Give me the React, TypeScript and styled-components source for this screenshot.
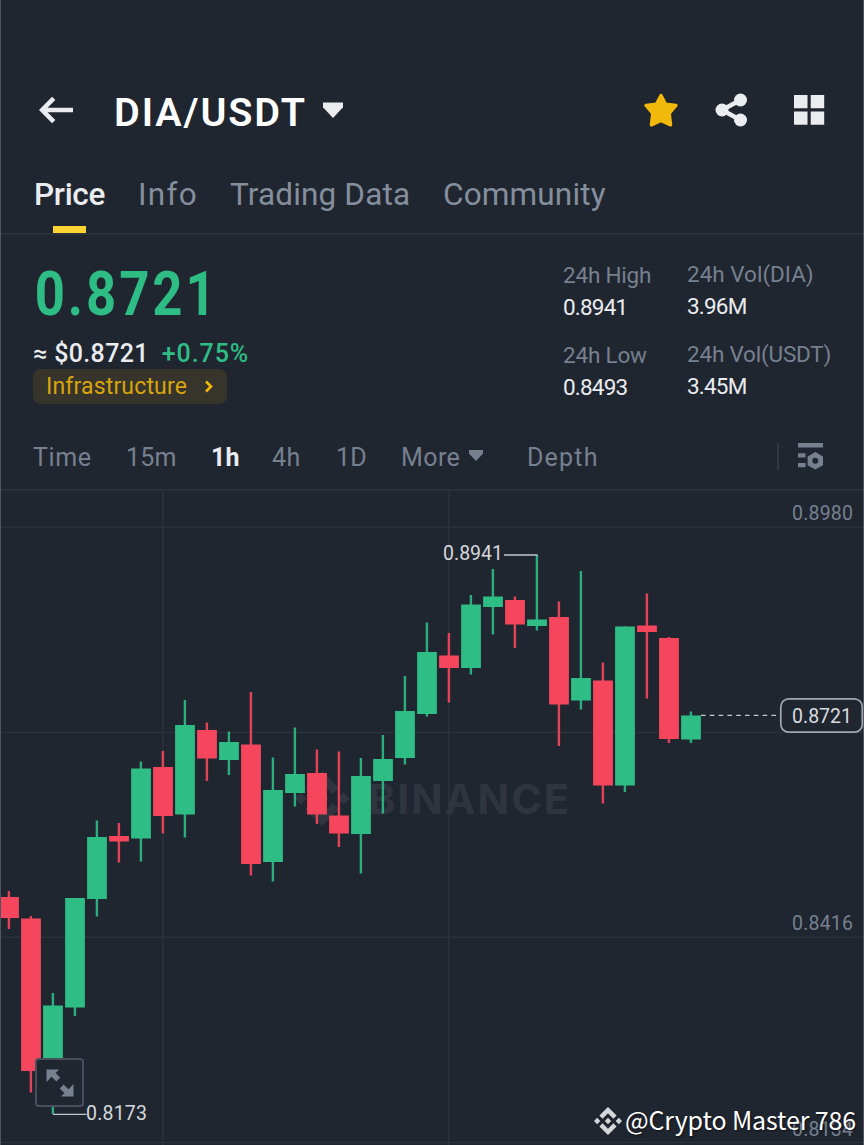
import React from "react";
import styled, { createGlobalStyle } from "styled-components";

const color = {
  bg: "#202630",
  line: "#2b313b",
  text: "#eaecef",
  muted: "#848e9c",
  dim: "#76808f",
  green: "#2ebd85",
  red: "#f6465d",
  yellow: "#f0b90b",
};

const GlobalStyle = createGlobalStyle`
  * { box-sizing: border-box; }
  body { margin: 0; background: ${color.bg}; }
`;

const Screen = styled.div`
  position: relative;
  width: 864px;
  height: 1145px;
  overflow: hidden;
  display: flex;
  flex-direction: column;
  background: ${color.bg};
  color: ${color.text};
  font-family: Roboto, "Liberation Sans", sans-serif;
  white-space: nowrap;
`;

const EdgeFrame = styled.div`
  position: absolute;
  inset: 0;
  border: solid #50555f;
  border-width: 0 1px;
  pointer-events: none;
`;

const Header = styled.header`
  height: 150px;
  padding: 70px 39px 0 39px;
  display: flex;
  align-items: center;
`;

const Title = styled.h1`
  margin: 5px 0 0 41px;
  width: 208px;
  font-size: 39.5px;
  font-weight: 600;
  line-height: 48px;
  letter-spacing: 1.9px;
  color: #fff;
`;

const HeaderActions = styled.div`
  margin-left: auto;
  display: flex;
  align-items: center;
`;

const ActionIcon = styled.svg<{ $gap?: number }>`
  display: block;
  margin-left: ${(p) => p.$gap ?? 0}px;
`;

const Tabs = styled.nav`
  height: 85px;
  padding: 0 34px;
  display: grid;
  grid-template-columns: 104px 92px 213px 1fr;
  border-bottom: 2px solid ${color.line};
`;

const Tab = styled.div<{ $active?: boolean; $spacing?: number }>`
  display: flex;
  flex-direction: column;
  justify-content: space-between;
  padding-top: 25px;
  font-size: 31.5px;
  line-height: 40px;
  letter-spacing: ${(p) => p.$spacing ?? 0.15}px;
  font-weight: ${(p) => (p.$active ? 500 : 400)};
  color: ${(p) => (p.$active ? color.text : color.muted)};
`;

const TabMarker = styled.span`
  width: 33px;
  height: 7px;
  margin-left: 19px;
  background: #fcd535;
`;

const Summary = styled.section`
  height: 191px;
  padding: 28px 0 0 33px;
  display: flex;
`;

const PriceBlock = styled.div`
  width: 530px;
`;

const Price = styled.div`
  height: 62px;
  line-height: 62px;
  padding-left: 2px;
  font-size: 62px;
  font-weight: 700;
  letter-spacing: 3.4px;
  color: ${color.green};
  transform: scaleX(0.85);
  transform-origin: 0 50%;
`;

const PriceSub = styled.div`
  margin-top: 15px;
  height: 27px;
  line-height: 27px;
  display: flex;
  gap: 13px;
  font-size: 25px;
  font-weight: 500;
  letter-spacing: 0.35px;
`;

const Change = styled.span`
  color: ${color.green};
  letter-spacing: 0.9px;
`;

const Tag = styled.div`
  margin-top: 2px;
  width: 194px;
  height: 35px;
  padding: 1px 13px 0;
  border-radius: 8px;
  display: flex;
  align-items: center;
  justify-content: space-between;
  background: #36342b;
  color: #d9a50d;
  font-size: 23px;
  line-height: 36px;
  letter-spacing: 0.17px;
`;

const StatColumn = styled.div<{ $width: number; $lift?: number }>`
  width: ${(p) => p.$width}px;
  margin-top: ${(p) => -(p.$lift ?? 0)}px;
`;

const Stat = styled.div`
  height: 80px;
  font-size: 22.5px;
  line-height: 26px;
`;

const StatLabel = styled.div<{ $spacing?: number }>`
  color: ${color.dim};
  letter-spacing: ${(p) => p.$spacing ?? 0}px;
`;

const StatValue = styled.div`
  margin-top: 6px;
  letter-spacing: -0.8px;
`;

const Intervals = styled.div`
  height: 65px;
  padding: 0 40px 0 33px;
  display: grid;
  grid-template-columns: 93px 85px 61px 64px 65px 126px 1fr auto;
  align-items: center;
  border-bottom: 2px solid ${color.line};
  font-size: 25px;
  line-height: 30px;
  color: ${color.dim};
`;

const Interval = styled.div<{ $active?: boolean; $spacing?: number }>`
  display: flex;
  align-items: center;
  gap: 9px;
  padding-top: 1px;
  letter-spacing: ${(p) => p.$spacing ?? 0.2}px;
  font-weight: ${(p) => (p.$active ? 700 : 400)};
  color: ${(p) => (p.$active ? color.text : color.dim)};
`;

const MoreArrow = styled.svg`
  display: block;
  margin-bottom: 4px;
`;

const IndicatorButton = styled.div`
  height: 27px;
  margin-bottom: 2px;
  padding-left: 18px;
  display: flex;
  align-items: center;
  border-left: 2px solid #323843;
`;

const ChartArea = styled.main`
  position: relative;
  height: 654px;
`;

const ChartSvg = styled.svg`
  display: block;
`;

const ExpandButton = styled.div`
  position: absolute;
  left: 35px;
  top: 567px;
  width: 49px;
  height: 49px;
  border: 2px solid #484f5c;
  border-radius: 4px;
  display: flex;
  align-items: center;
  justify-content: center;
  background: ${color.bg};
`;

const Credit = styled.div`
  position: absolute;
  left: 594px;
  bottom: 5px;
  height: 38px;
  display: flex;
  align-items: center;
  gap: 3px;
  font-family: "Noto Sans CJK SC", "Noto Sans", sans-serif;
  font-size: 25px;
  line-height: 38px;
  letter-spacing: -0.12px;
  color: #fff;
  text-shadow: 1px 1px 2px rgba(0, 0, 0, 0.6);
`;

const CreditName = styled.span`
  padding-bottom: 4px;
`;

const BINANCE_MARK =
  "M16.624 13.9202l2.7175 2.7154-7.353 7.353-7.353-7.352 2.7175-2.7164 4.6355 4.6595 4.6356-4.6595zm4.6366-4.6366L24 12l-2.7154 2.7164L18.5682 12l2.6924-2.7164zm-9.272.001l2.7163 2.6914-2.7164 2.7174v-.001L9.2721 12l2.7164-2.7154zm-9.2722-.001L5.4088 12l-2.6914 2.6924L0 12l2.7164-2.7164zM11.9885.0115l7.353 7.329-2.7174 2.7154-4.6356-4.6356-4.6355 4.6595-2.7174-2.7154 7.353-7.353z";

type Candle = [up: 0 | 1, high: number, top: number, bottom: number, low: number];

const CHART_TOP = 491;
const candles: Candle[] = [
  [0, 891, 897, 918, 929],
  [0, 916, 918.5, 1071, 1092.5],
  [1, 993, 1005.5, 1070, 1114],
  [1, 898, 898, 1007.5, 1016],
  [1, 820.5, 837, 899, 916.5],
  [0, 823, 836, 841.5, 862.5],
  [1, 761.5, 768.5, 838.5, 861.5],
  [0, 751, 767, 816, 833.5],
  [1, 700, 725, 814.5, 837.5],
  [0, 722.5, 730, 758.5, 781],
  [1, 731.5, 742, 760, 775],
  [0, 692, 744.5, 864, 875.5],
  [1, 757.5, 790, 862, 881.5],
  [1, 727.5, 774, 793, 806.5],
  [0, 749.5, 773, 814.5, 824],
  [0, 751.5, 815.5, 833.5, 847],
  [1, 758, 776, 834, 873.5],
  [1, 735, 759, 781, 813.5],
  [1, 676, 711, 758, 764.5],
  [1, 622.5, 652, 714, 716.5],
  [0, 633, 655.5, 668, 702.5],
  [1, 595, 604.5, 668, 674.5],
  [1, 569, 596.5, 607, 634.5],
  [0, 596.5, 600, 624.5, 648],
  [1, 555, 619.5, 626, 630.5],
  [0, 601.5, 617, 704.5, 746],
  [1, 571, 678, 700.5, 709.5],
  [0, 662.5, 680.5, 785.5, 803.5],
  [1, 626.5, 626.5, 785.5, 792],
  [0, 593.5, 625.5, 632, 698.5],
  [0, 637, 638, 739, 743],
  [1, 711.5, 715.5, 739.5, 743],
];

const axisLabels = [
  { y: 520.4, text: "0.8980" },
  { y: 930.4, text: "0.8416" },
  { y: 1136.4, text: "0.8134" },
];

function CandleChart() {
  return (
    <ChartSvg width="864" height="654" viewBox={`0 ${CHART_TOP} 864 654`} fontFamily="Roboto, sans-serif" fontSize="19.5">
      <g stroke={color.line} strokeWidth="1.6">
        {[162.8, 448.8].map((x) => (
          <line key={x} x1={x} x2={x} y1="490" y2="1145" />
        ))}
        {[527.2, 732.5, 937.3, 1142.5].map((y) => (
          <line key={y} x1="0" x2="864" y1={y} y2={y} />
        ))}
      </g>
      <g fill="#2f343f">
        <path d={BINANCE_MARK} transform="translate(294.5 771) scale(2.3)" />
        <text x="368" y="813.5" fontFamily="Inter, sans-serif" fontWeight="700" fontSize="41.5" textLength="201">
          BINANCE
        </text>
      </g>
      {candles.map(([up, high, top, bottom, low], i) => {
        const x = 9 + i * 22;
        return (
          <g key={i} fill={up ? color.green : color.red}>
            <rect x={x - 1.3} y={high} width="2.4" height={low - high} opacity="0.9" />
            <rect x={x - 9.9} y={top} width="19.8" height={bottom - top} />
          </g>
        );
      })}
      <g stroke="#c3c6cc" strokeWidth="1.4">
        <line x1="504" x2="537.5" y1="555" y2="555" />
        <line x1="53" x2="86.5" y1="1114.4" y2="1114.4" />
        <line x1="701" x2="776" y1="715.4" y2="715.4" strokeDasharray="4.6 4.2" />
      </g>
      <g fill="#d5d8dc">
        <text x="443" y="560.4" textLength="60">0.8941</text>
        <text x="86" y="1120.2" textLength="61">0.8173</text>
      </g>
      <g fill={color.dim}>
        {axisLabels.map((l) => (
          <text key={l.text} x="792" y={l.y} textLength="61">
            {l.text}
          </text>
        ))}
      </g>
      <rect x="780.8" y="698.8" width="81.5" height="33.4" rx="8" fill={color.bg} stroke="#a3a6ac" strokeWidth="1.7" />
      <text x="792" y="722.7" textLength="60" fill="#d9dce0">0.8721</text>
    </ChartSvg>
  );
}

export default function App() {
  return (
    <>
      <GlobalStyle />
      <Screen>
        <Header>
          <ActionIcon width="34" height="28" viewBox="0 0 34 28" fill="none" stroke={color.text} strokeWidth="4.6">
            <path d="M14.7 2.3 3.2 14l11.5 11.7M3.5 14H34" />
          </ActionIcon>
          <Title>DIA/USDT</Title>
          <ActionIcon width="22" height="17" viewBox="0 0 22 17" fill={color.text}>
            <path d="M1 .6h20v4.6L11 16 1 5.2z" />
          </ActionIcon>
          <HeaderActions>
            <ActionIcon width="34" height="35" viewBox="0 0 34 35">
              <path
                d="M17 2.500 21.600 11.200 31.900 12.500 25.200 20.300 26.600 31.900 17 27.500 7.400 31.900 8.800 20.300 2.100 12.500 12.400 11.200z"
                fill={color.yellow}
                stroke={color.yellow}
                strokeWidth="3.400"
                strokeLinejoin="round"
              />
            </ActionIcon>
            <ActionIcon $gap={37} width="33" height="34" viewBox="0 0 33 34" fill={color.text}>
              <path d="M7 17 25.500 7M7 17l18.500 10" stroke={color.text} strokeWidth="4.500" />
              <circle cx="7" cy="17" r="6.500" />
              <circle cx="25.500" cy="7" r="6.500" />
              <circle cx="25.500" cy="27" r="6.500" />
            </ActionIcon>
            <ActionIcon $gap={46} width="31" height="30" viewBox="0 0 31 30" fill={color.text}>
              <path d="M0 0h13.500v13.300H0zM16.700 0h13.500v13.300H16.700zM0 16.500h13.500v13.300H0zM16.700 16.500h13.500v13.300H16.700z" />
            </ActionIcon>
          </HeaderActions>
        </Header>

        <Tabs>
          <Tab $active $spacing={-0.3}>
            Price
            <TabMarker />
          </Tab>
          <Tab $spacing={1.3}>Info</Tab>
          <Tab>Trading Data</Tab>
          <Tab>Community</Tab>
        </Tabs>

        <Summary>
          <PriceBlock>
            <Price>0.8721</Price>
            <PriceSub>
              <span>≈ $0.8721</span>
              <Change>+0.75%</Change>
            </PriceSub>
            <Tag>
              Infrastructure
              <svg width="10" height="14" viewBox="0 0 10 14" fill="none" stroke={color.yellow} strokeWidth="2.600">
                <path d="M2 1.500l5 5-5 5" />
              </svg>
            </Tag>
          </PriceBlock>
          <StatColumn $width={124} $lift={1}>
            <Stat>
              <StatLabel $spacing={-0.2}>24h High</StatLabel>
              <StatValue>0.8941</StatValue>
            </Stat>
            <Stat>
              <StatLabel $spacing={-0.2}>24h Low</StatLabel>
              <StatValue>0.8493</StatValue>
            </Stat>
          </StatColumn>
          <StatColumn $width={170} $lift={2}>
            <Stat>
              <StatLabel>24h Vol(DIA)</StatLabel>
              <StatValue>3.96M</StatValue>
            </Stat>
            <Stat>
              <StatLabel $spacing={-0.2}>24h Vol(USDT)</StatLabel>
              <StatValue>3.45M</StatValue>
            </Stat>
          </StatColumn>
        </Summary>

        <Intervals>
          <Interval $spacing={0.6}>Time</Interval>
          <Interval>15m</Interval>
          <Interval $active>1h</Interval>
          <Interval $spacing={0.4}>4h</Interval>
          <Interval>1D</Interval>
          <Interval $spacing={0.4}>
            More
            <MoreArrow width="14" height="12" viewBox="0 0 14 12" fill={color.dim}>
              <path d="M0 0h14v3.500L7 11 0 3.500z" />
            </MoreArrow>
          </Interval>
          <Interval $spacing={1.2}>Depth</Interval>
          <IndicatorButton>
            <svg width="27" height="27" viewBox="0 0 27 27" fill={color.dim}>
              <path d="M1 0h25v4.600H1zM1 10.300h7.500v4.200H1zM1 20h7.500v4.200H1z" />
              <path
                fillRule="evenodd"
                d="M18.300 9l7.700 4.400v8.800l-7.700 4.400-7.700-4.400v-8.800zM18.300 14.800a3 3 0 1 0 0 6 3 3 0 0 0 0-6z"
              />
            </svg>
          </IndicatorButton>
        </Intervals>

        <ChartArea>
          <CandleChart />
          <ExpandButton>
            <svg width="28" height="28" viewBox="0 0 28 28" fill={color.dim}>
              <path d="M.5.5H13L9.600 3.900l4.700 4.700-3.900 4-4.900-4.800L.5 13zM27.500 27.500H15l3.400-3.400-4.700-4.700 3.900-4 4.900 4.800L27.500 15z" />
            </svg>
          </ExpandButton>
        </ChartArea>

        <Credit>
          <svg width="28" height="28" viewBox="0 0 24 24" fill="#d6d7d9">
            <path d={BINANCE_MARK} />
          </svg>
          <CreditName>@Crypto Master 786</CreditName>
        </Credit>
        <EdgeFrame />
      </Screen>
    </>
  );
}
